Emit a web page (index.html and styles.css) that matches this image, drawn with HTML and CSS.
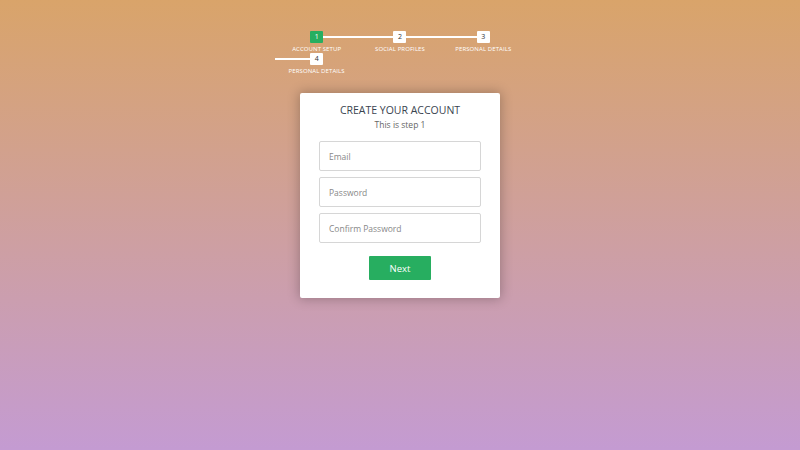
FILE: index.html
```html
<!DOCTYPE html>
<html>
<head>
<meta charset="utf-8">
<link rel="stylesheet" href="styles.css">
</head>
<body>
<div class="page">
  <ul class="progress">
    <li class="step active"><span class="num">1</span><span class="label">ACCOUNT SETUP</span></li>
    <li class="step"><span class="num">2</span><span class="label">SOCIAL PROFILES</span></li>
    <li class="step"><span class="num">3</span><span class="label">PERSONAL DETAILS</span></li>
    <li class="step"><span class="num">4</span><span class="label">PERSONAL DETAILS</span></li>
  </ul>
  <form class="card">
    <h2 class="title">CREATE YOUR ACCOUNT</h2>
    <h3 class="subtitle">This is step 1</h3>
    <input class="field" type="text" placeholder="Email">
    <input class="field" type="password" placeholder="Password">
    <input class="field" type="password" placeholder="Confirm Password">
    <button class="next" type="button">Next</button>
  </form>
</div>
</body>
</html>
```
FILE: styles.css
```css
* { box-sizing: border-box; }
html, body { margin: 0; height: 100%; }
body {
  font-family: "Open Sans", "Liberation Sans", sans-serif;
  background: linear-gradient(180deg, #d9a46a 0%, #c49bd2 100%);
  width: 800px;
  height: 450px;
  overflow: hidden;
}
.page {
  display: flex;
  flex-direction: column;
  align-items: center;
  padding-top: 31px;
}
.progress {
  list-style: none;
  margin: 0;
  padding: 0;
  width: 250px;
  display: flex;
  flex-wrap: wrap;
  overflow: hidden;
}
.step {
  width: 83.33px;
  display: flex;
  flex-direction: column;
  align-items: center;
  position: relative;
  height: 22px;
}
.step::after {
  content: "";
  position: absolute;
  height: 2px;
  background: #fff;
  width: 100%;
  left: -50%;
  top: 5px;
  z-index: 0;
}
.step:first-child::after { content: none; }
.num {
  width: 13px;
  height: 12px;
  line-height: 12px;
  background: #fff;
  color: #333;
  font-size: 7px;
  text-align: center;
  border-radius: 1px;
  position: relative;
  z-index: 1;
}
.step.active .num { background: #27ae60; color: #fff; }
.label {
  margin-top: 2px;
  font-size: 6px;
  color: #fff;
  white-space: nowrap;
  letter-spacing: 0.1px;
}
.card {
  margin-top: 18px;
  width: 200px;
  background: #fff;
  border-radius: 2px;
  box-shadow: 0 0 12px 1px rgba(0,0,0,0.25);
  padding: 10px 19px 18px;
  display: flex;
  flex-direction: column;
  align-items: center;
}
.title {
  margin: 0;
  font-weight: 400;
  font-size: 10.5px;
  color: #3a4450;
  line-height: 14px;
}
.subtitle {
  margin: 2px 0 10px;
  font-weight: 400;
  font-size: 8.5px;
  color: #666;
  line-height: 12px;
}
.field {
  width: 162px;
  height: 30px;
  border: 1px solid #d6d6d6;
  border-radius: 2px;
  padding: 0 9px;
  font-family: inherit;
  font-size: 8.5px;
  color: #2c3e50;
  margin-bottom: 6px;
  outline: none;
}
.field::placeholder { color: #888; }
.next {
  margin-top: 7px;
  width: 62px;
  height: 24px;
  border: none;
  border-radius: 1px;
  background: #27ae60;
  color: #fff;
  font-family: inherit;
  font-size: 9.5px;
  cursor: pointer;
}
```
